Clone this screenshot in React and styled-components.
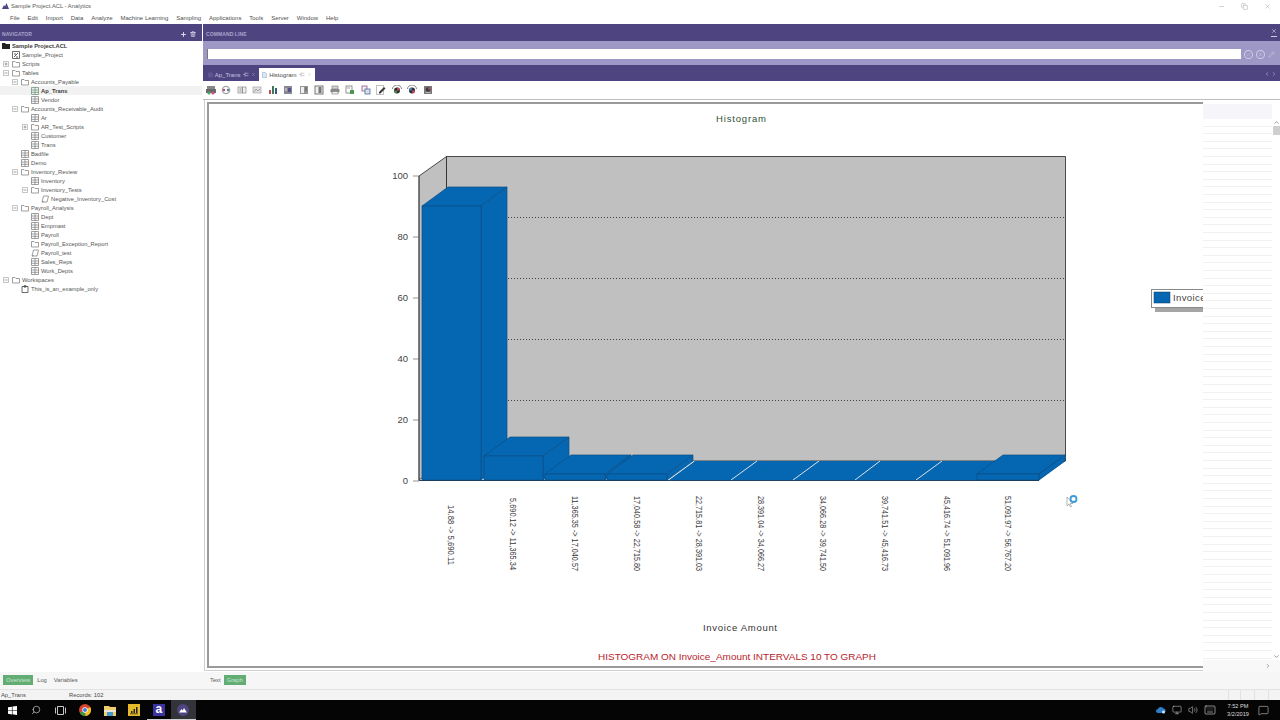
import React from "react";
import styled, { createGlobalStyle } from "styled-components";
import { Plus, Trash2, X, Minus, Copy, Search, Check, Pencil, ChevronLeft, ChevronRight, ChevronUp, ChevronDown, Volume2, Monitor, Keyboard, MessageSquare } from "lucide-react";

const Global = createGlobalStyle`
  html, body { margin: 0; padding: 0; background: #fff; }
  * { box-sizing: border-box; }
  #root { width: 1280px; height: 720px; overflow: hidden; }
`;

const Page = styled.div`
  width: 1280px; height: 720px; display: flex; flex-direction: column; overflow: hidden;
  font-family: "Liberation Sans", Arial, sans-serif; font-size: 5.8px; color: #555; background: #fff;
`;
const TitleBar = styled.div`
  height: 12px; display: flex; align-items: center; padding-left: 2px; gap: 2px; color: #5a5a5a; font-size: 5.8px;
`;
const WindowControls = styled.div`
  margin-left: auto; display: flex; align-items: center; color: #666; padding-right: 1.5px;
`;
const WindowButton = styled.span`
  width: 23px; display: flex; justify-content: center; align-items: center;
`;
const MenuBar = styled.div`
  height: 12px; display: flex; align-items: center; gap: 7.9px; padding-left: 10px; color: #505050; font-size: 6px;
`;
const Workspace = styled.div`
  height: 648px; display: flex;
`;
const Sidebar = styled.aside`
  width: 202px; flex: none; margin-right: 1px; display: flex; flex-direction: column;
`;
const PurpleHead = styled.div`
  height: 17px; flex: none; background: #4e4480; display: flex; align-items: center; padding: 3px ${p => p.$right}px 0 ${p => p.$left}px;
  color: #aaa5cc; font-size: 5px; font-weight: 700; letter-spacing: 0.1px;
`;
const HeadActions = styled.div`
  margin-left: auto; display: flex; align-items: center; gap: 3px; color: #e9e7f4;
`;
const CloseMark = styled.span`
  display: flex; padding-bottom: 2px; margin-top: -3px; border-bottom: 1px solid #cfcbe6; color: #e9e7f4;
`;
const Tree = styled.div`
  flex: 1; display: flex; flex-direction: column; color: #555;
`;
const TreeRow = styled.div`
  height: 9px; display: flex; align-items: center; padding-left: ${p => p.$off}px;
  background: ${p => (p.$selected ? "#f2f2f2" : "transparent")};
  font-weight: ${p => (p.$bold ? 700 : 400)}; color: ${p => (p.$bold ? "#3c3c3c" : "#565656")};
  white-space: nowrap;
`;
const ExpSlot = styled.span`
  width: 10px; flex: none; display: flex; align-items: center; padding-left: 1px;
`;
const IconSlot = styled.span`
  width: 10px; flex: none; display: flex; align-items: center;
`;
const Main = styled.main`
  flex: 1; min-width: 0; display: flex; flex-direction: column;
`;
const CommandRow = styled.div`
  height: 24px; flex: none; background: #9e98c6; display: flex; align-items: center; padding: 2px 4px 0 4px; gap: 2.5px;
`;
const CommandInput = styled.div`
  width: 1035px; height: 10px; background: #fff; border-left: 1px solid #777; margin-right: 1px;
`;
const RoundAction = styled.span`
  width: 9px; height: 9px; display: flex; align-items: center; justify-content: center; color: #d8d5ea;
  border-radius: 50%; border: ${p => (p.$plain ? "none" : "1px solid #d0cce4")};
`;
const TabsBar = styled.div`
  height: 16px; flex: none; background: #4e4480; display: flex; align-items: flex-end; padding-left: 5px;
`;
const Tab = styled.div`
  height: 13px; display: flex; align-items: center; gap: 2px; padding: 0 3px 0 ${p => (p.$active ? 3 : 0)}px;
  background: ${p => (p.$active ? "#fff" : "transparent")};
  color: ${p => (p.$active ? "#4a4a4a" : "#c9c5e2")}; font-size: 6px;
  width: ${p => (p.$active ? 56 : 51)}px;
`;
const TabTail = styled.span`
  margin-left: auto; display: flex; align-items: center; gap: 2.500px; color: ${p => (p.$active ? "#bbb" : "#b5b0d6")};
`;
const TabArrows = styled.div`
  margin: 0 3px 4px auto; display: flex; gap: 1px; color: #cfcce6;
`;
const Toolbar = styled.div`
  height: 19px; flex: none; border-bottom: 1px solid #bdbdbd; display: flex; align-items: center; gap: 5.5px; padding-left: 2.5px;
`;
const ToolSvg = styled.svg`
  flex: none; opacity: 0.88;
`;
const ChartRow = styled.div`
  flex: 1; min-height: 0; display: flex;
`;
const ChartWrap = styled.div`
  width: 999px; height: 571px; margin-left: 1px; flex: none; padding: 2px 0 0 2px;
  border-left: 1px solid #cfcfcf; border-bottom: 1px solid #cfcfcf;
`;
const ChartFrame = styled.div`
  width: 996px; height: 566px; overflow: hidden;
  box-shadow: inset 2px 2px 0 #9a9a9a, inset 0 -2px 0 #9a9a9a;
  svg { display: block; }
`;
const GhostPanel = styled.div`
  flex: 1; display: flex; flex-direction: column; padding-top: 4px;
`;
const GhostBand = styled.div`
  height: 15px; flex: none; background: #f5f5fa; margin-right: 8px;
`;
const GhostBody = styled.div`
  flex: 1; min-height: 0; display: flex;
`;
const GhostLines = styled.div`
  flex: 1;
  background: repeating-linear-gradient(to bottom, #fff 0, #fff 6.6px, #f1f1f1 6.6px, #f1f1f1 7.6px);
`;
const ScrollTrack = styled.div`
  width: 8px; flex: none; display: flex; flex-direction: column; align-items: center; color: #555;
`;
const ScrollThumb = styled.div`
  width: 7px; height: 9px; background: #cfcfcf;
`;
const ScrollGap = styled.div`
  flex: 1;
`;
const GhostFoot = styled.div`
  height: 12px; flex: none; background: #f8f8f8; display: flex; align-items: center; justify-content: flex-end; padding-right: 9px; color: #555;
`;
const BottomBar = styled.div`
  height: 17px; flex: none; background: #f6f6f6; display: flex; align-items: center; padding-bottom: 1px;
`;
const BottomLeft = styled.div`
  width: 207px; flex: none; display: flex; align-items: center; gap: 4px; padding-left: 3px;
`;
const BottomRight = styled.div`
  display: flex; align-items: center; gap: 3px; padding-left: 3px;
`;
const ViewTab = styled.span`
  height: 10px; display: flex; align-items: center; padding: 0 ${p => (p.$active ? 3 : 0)}px;
  background: ${p => (p.$active ? "#62ad74" : "transparent")}; color: ${p => (p.$active ? "#c8e6cf" : "#5a5a5a")};
  margin-right: ${p => p.$mr || 0}px;
`;
const StatusBar = styled.div`
  height: 11px; flex: none; background: #f3f3f3; border-top: 1px solid #e2e2e2; display: flex; align-items: center; padding-left: 1px; color: #4a4a4a;
`;
const StatusName = styled.span`
  width: 68px;
`;
const StatusCells = styled.div`
  margin-left: auto; display: flex; height: 100%;
`;
const StatusCell = styled.span`
  width: ${p => p.$w}px; border-left: 1px solid #e2e2e2;
`;
const Taskbar = styled.footer`
  height: 20px; flex: none; background: #050505; display: flex; align-items: center; color: #e4e4e4;
`;
const TaskItem = styled.span`
  width: ${p => p.$w || 24.5}px; height: 20px; flex: none; display: flex; align-items: center; justify-content: center;
  background: ${p => (p.$active ? "#33333a" : "transparent")};
  box-shadow: ${p => (p.$line ? "inset 0 -1px 0 #cfcfcf" : "none")};
`;
const Mirrored = styled.span`
  display: flex; transform: scaleX(-1);
`;
const AclGlyph = styled.span`
  width: 12px; height: 12px; background: #3b34a0; color: #fff; font-weight: 700; font-size: 12px; line-height: 11px; text-align: center; display: block;
`;
const Tray = styled.div`
  margin-left: auto; display: flex; align-items: center; gap: 5px; color: #ddd;
`;
const TrayIcon = styled.span`
  display: flex; margin-right: ${p => p.$mr || 0}px;
`;
const Clock = styled.div`
  width: 34px; margin-right: -2.5px; text-align: center; font-size: 5.6px; line-height: 8px; color: #ddd;
`;
const TrayTail = styled.span`
  width: 6.5px; flex: none;
`;

const TreeIcon = ({ kind, selected }) => {
  if (kind === "root")
    return <svg width="8" height="8" viewBox="0 0 8 8"><path d="M0 1h3l1 1h4v5H0z" fill="#222" /></svg>;
  if (kind === "folder")
    return <svg width="8" height="8" viewBox="0 0 8 8"><path d="M.5 1.5h2.5l1 1h3.500v4.500h-7z" fill="#fff" stroke="#777" strokeWidth=".7" /></svg>;
  if (kind === "table")
    return <svg width="8" height="8" viewBox="0 0 8 8"><path d="M.5.5h7v7h-7zM.5 3h7M.5 5.300h7M4 .5v7" fill={selected ? "#e7f3ea" : "#fff"} stroke={selected ? "#6a8a76" : "#777"} strokeWidth=".7" /></svg>;
  if (kind === "report")
    return <svg width="8" height="8" viewBox="0 0 8 8"><path d="M.5.5h7v7h-7z" fill="#fff" stroke="#444" strokeWidth=".8" /><path d="M2 6l4-4M2 3h2M4 6h2" stroke="#333" strokeWidth=".8" /></svg>;
  if (kind === "script")
    return <svg width="8" height="8" viewBox="0 0 8 8"><path d="M2.500 1h5l-1.500 6h-5zM1 7c1 0 1.500-.5 1.500-1" fill="#fff" stroke="#777" strokeWidth=".7" /></svg>;
  return <svg width="8" height="8" viewBox="0 0 8 8"><path d="M1 1.500h6v6H1zM3 .7h2v1.400H3z" fill="#fff" stroke="#444" strokeWidth=".8" /></svg>;
};

const Expander = ({ open }) => (
  <svg width="6" height="6" viewBox="0 0 6 6">
    <path d="M.5.5h5v5h-5z" fill="#fff" stroke="#aaa" strokeWidth=".7" />
    <path d={open ? "M1.500 3h3" : "M1.500 3h3M3 1.500v3"} stroke="#666" strokeWidth=".6" />
  </svg>
);

const PinMark = () => (
  <svg width="6" height="5" viewBox="0 0 6 5"><path d="M0 2.500h2M2 .5v4M2 1.300h3.500M2 3.700h3.500" fill="none" stroke="currentColor" strokeWidth=".7" /></svg>
);

const OFF = [2, 2, 11, 21, 31];
const rows = [
  { t: "Sample Project.ACL", l: 0, i: "root", b: true },
  { t: "Sample_Project", l: 1, i: "report" },
  { t: "Scripts", l: 1, i: "folder", e: "plus" },
  { t: "Tables", l: 1, i: "folder", e: "minus" },
  { t: "Accounts_Payable", l: 2, i: "folder", e: "minus" },
  { t: "Ap_Trans", l: 3, i: "table", b: true, s: true },
  { t: "Vendor", l: 3, i: "table" },
  { t: "Accounts_Receivable_Audit", l: 2, i: "folder", e: "minus" },
  { t: "Ar", l: 3, i: "table" },
  { t: "AR_Test_Scripts", l: 3, i: "folder", e: "plus" },
  { t: "Customer", l: 3, i: "table" },
  { t: "Trans", l: 3, i: "table" },
  { t: "Badfile", l: 2, i: "table" },
  { t: "Demo", l: 2, i: "table" },
  { t: "Inventory_Review", l: 2, i: "folder", e: "minus" },
  { t: "Inventory", l: 3, i: "table" },
  { t: "Inventory_Tests", l: 3, i: "folder", e: "minus" },
  { t: "Negative_Inventory_Cost", l: 4, i: "script" },
  { t: "Payroll_Analysis", l: 2, i: "folder", e: "minus" },
  { t: "Dept", l: 3, i: "table" },
  { t: "Empmast", l: 3, i: "table" },
  { t: "Payroll", l: 3, i: "table" },
  { t: "Payroll_Exception_Report", l: 3, i: "folder" },
  { t: "Payroll_test", l: 3, i: "script" },
  { t: "Sales_Reps", l: 3, i: "table" },
  { t: "Work_Depts", l: 3, i: "table" },
  { t: "Workspaces", l: 1, i: "folder", e: "minus" },
  { t: "This_is_an_example_only", l: 2, i: "clip" },
];

const menus = ["File", "Edit", "Import", "Data", "Analyze", "Machine Learning", "Sampling", "Applications", "Tools", "Server", "Window", "Help"];

const Ico = ({ children }) => <ToolSvg width="10" height="10" viewBox="0 0 10 10">{children}</ToolSvg>;
const toolIcons = [
  <Ico key="0"><rect x="1" y="1" width="8" height="4" fill="#777" /><rect x="0" y="4" width="10" height="4" fill="#555" /><circle cx="3" cy="8" r="1.600" fill="#3a9a4a" /><circle cx="7" cy="8" r="1.600" fill="#c23a7a" /></Ico>,
  <Ico key="1"><circle cx="5" cy="5" r="3.600" fill="none" stroke="#999" strokeWidth="1.400" /><circle cx="3" cy="5" r="1.200" fill="#b03060" /><circle cx="7" cy="5" r="1.200" fill="#38707a" /></Ico>,
  <Ico key="2"><rect x="1" y="2" width="8" height="6" fill="#eee" stroke="#777" strokeWidth=".7" /><path d="M2.500 4h2M2.500 6h2M5.500 2v6" stroke="#555" strokeWidth=".7" /></Ico>,
  <Ico key="3"><rect x="1" y="2" width="8" height="6" fill="#ddd" stroke="#999" strokeWidth=".7" /><path d="M2 7l2-3 2 2 2-2" fill="none" stroke="#778" strokeWidth=".7" /></Ico>,
  <Ico key="4"><rect x="1" y="5" width="2" height="4" fill="#b8332e" /><rect x="4" y="1" width="2" height="8" fill="#1e6a3a" /><rect x="7" y="3" width="2" height="6" fill="#26416e" /></Ico>,
  <Ico key="5"><rect x="1" y="1" width="8" height="8" fill="#778" /><rect x="5" y="3" width="3" height="4" fill="#3d3a80" /><rect x="2" y="3" width="2" height="3" fill="#b8a8a8" /></Ico>,
  <Ico key="6"><rect x="1" y="1" width="8" height="8" fill="#888" /><rect x="2" y="2" width="3" height="6" fill="#eee" /><path d="M6 3h2M6 5h2" stroke="#333" strokeWidth=".8" /></Ico>,
  <Ico key="7"><rect x="1" y="1" width="8" height="8" fill="#eee" stroke="#666" /><rect x="4.500" y="2" width="3" height="6" fill="#666" /></Ico>,
  <Ico key="8"><rect x="2" y="1" width="6" height="3" fill="#ccc" stroke="#666" strokeWidth=".6" /><rect x="0.5" y="4" width="9" height="3.500" rx=".8" fill="#777" /><rect x="2" y="6.500" width="6" height="2.500" fill="#eee" stroke="#666" strokeWidth=".6" /></Ico>,
  <Ico key="9"><rect x="1" y="1" width="6" height="7" fill="#fff" stroke="#666" strokeWidth=".8" /><rect x="5" y="5" width="4" height="4" fill="#2f8a3a" /><path d="M2 3h3" stroke="#666" strokeWidth=".7" /></Ico>,
  <Ico key="10"><rect x="1" y="1" width="5" height="5" fill="#eee" stroke="#8a3a7a" strokeWidth=".8" /><rect x="4" y="4" width="5" height="5" fill="#d8d8e8" stroke="#3a5a8a" strokeWidth=".8" /></Ico>,
  <Ico key="11"><path d="M.5.5h7v9h-7z" fill="none" stroke="#333" strokeWidth=".7" strokeDasharray="1 1" /><path d="M3 7l5-5 1.500 1.500-5 5H3z" fill="#222" /></Ico>,
  <Ico key="12"><path d="M.5 4a4.500 4 0 0 1 9 0" fill="none" stroke="#555" strokeWidth=".8" /><circle cx="5" cy="5.500" r="3" fill="#111" /><path d="M5 5.500V2.500a3 3 0 0 1 3 3z" fill="#b5304a" /><path d="M5 5.500H2a3 3 0 0 0 3 3z" fill="#2c7a3c" /></Ico>,
  <Ico key="13"><path d="M.5 4a4.500 4 0 0 1 9 0" fill="none" stroke="#555" strokeWidth=".8" /><circle cx="5" cy="5.500" r="3" fill="#111" /><path d="M5 5.500V2.500a3 3 0 0 0-3 3z" fill="#3a6ab0" /><path d="M5 5.500h3a3 3 0 0 1-3 3z" fill="#b5304a" /></Ico>,
  <Ico key="14"><rect x="1" y="1" width="8" height="8" fill="#666" /><circle cx="5" cy="4.500" r="2.200" fill="#222" /><path d="M5 4.500V2.300a2.200 2.200 0 0 1 2.200 2.200z" fill="#b5304a" /><rect x="2.500" y="7" width="5" height="1" fill="#aaa" /></Ico>,
];

const xLabels = [
  ["14.88 -> 5,690.11", 450.5, 505, 60],
  ["5,690.12 -> 11,365.34", 512.5, 498, 72],
  ["11,365.35 -> 17,040.57", 574.5, 496, 75],
  ["17,040.58 -> 22,715.80", 636.5, 496, 75],
  ["22,715.81 -> 28,391.03", 698.5, 496, 75],
  ["28,391.04 -> 34,066.27", 760.5, 496, 75],
  ["34,066.28 -> 39,741.50", 822.5, 496, 75],
  ["39,741.51 -> 45,416.73", 884.5, 496, 75],
  ["45,416.74 -> 51,091.96", 946.5, 496, 75],
  ["51,091.97 -> 56,767.20", 1007.5, 496, 75],
];
const BLUE = "#0567b2";
const EDGE = "#0d4d85";

const bars = [
  [422, 481, 206],
  [484, 543, 456],
  [545, 605, 474],
  [607, 667, 474],
  [977, 1039, 474],
];

const Chart = () => (
  <svg width="996" height="565" viewBox="207 102 996 565" fontFamily="'Liberation Sans', Arial, sans-serif">
    <text x="741" y="122" fontSize="9.500" textAnchor="middle" fill="#2f4f3a" textLength="50">Histogram</text>

    <polygon points="446.500,156.500 1065.500,156.500 1065.500,461 446.500,461" fill="#c0c0c0" stroke="#222" strokeWidth=".8" />
    <polygon points="419,176 446.500,156.500 446.500,461 419,480" fill="#c0c0c0" stroke="#222" strokeWidth=".8" />
    {[217.5, 278.5, 339.5, 400.5].map(y => (
      <line key={y} x1="508" x2="1065" y1={y} y2={y} stroke="#222" strokeWidth=".8" strokeDasharray="1 2" />
    ))}

    {[[100, 176], [80, 237], [60, 298], [40, 359], [20, 420], [0, 481]].map(([v, y]) => (
      <g key={v}>
        <text x="408" y={y + 2.5} fontSize="9.500" textAnchor="end" fill="#444">{v}</text>
        <line x1="413" x2="419" y1={y} y2={y} stroke="#666" strokeWidth=".7" />
      </g>
    ))}

    <polygon points="669,480 695,461 1065,461 1039,480" fill={BLUE} />
    {[[668, 694], [731, 757], [793, 819], [855, 880], [916, 942]].map(([a, b]) => (
      <line key={a} x1={a} y1="480" x2={b} y2="461" stroke="#d6e2ee" strokeWidth="1" />
    ))}

    {bars.map(([x0, x1, y]) => (
      <g key={x0} stroke={EDGE} strokeWidth=".7">
        <polygon points={`${x0},${y} ${x0 + 26},${y - 19} ${x1 + 26},${y - 19} ${x1},${y}`} fill={BLUE} />
        <polygon points={`${x1},${y} ${x1 + 26},${y - 19} ${x1 + 26},461 ${x1},480`} fill={BLUE} />
        <rect x={x0} y={y} width={x1 - x0} height={480 - y} fill={BLUE} />
      </g>
    ))}
    <line x1="419" x2="1039" y1="480.500" y2="480.500" stroke="#0a2f52" strokeWidth=".9" />
    <line x1="419" x2="419" y1="176" y2="481" stroke="#555" strokeWidth="1" />

    {xLabels.map(([t, x, y, len]) => (
      <text key={t} transform={`translate(${x - 3},${y}) rotate(90)`} fontSize="8.600" fill="#3a3a3a" textLength={len} lengthAdjust="spacingAndGlyphs">{t}</text>
    ))}

    <text x="740" y="631" fontSize="9.500" textAnchor="middle" fill="#333" textLength="74">Invoice Amount</text>
    <text x="598" y="659.500" fontSize="9" fill="#b8232b" textLength="278" lengthAdjust="spacingAndGlyphs">HISTOGRAM ON Invoice_Amount INTERVALS 10 TO GRAPH</text>

    <rect x="1155" y="293" width="60" height="19" fill="#a5a5a5" />
    <rect x="1151.500" y="289.500" width="70" height="18" fill="#fff" stroke="#888" strokeWidth="1" />
    <rect x="1154" y="292" width="16" height="11" fill={BLUE} stroke="#0a3a66" strokeWidth=".5" />
    <text x="1173" y="300.500" fontSize="9.500" letterSpacing=".4" fill="#444">Invoice Amount</text>

    <path d="M1067 497v9l2-2 1.500 3 1-.5-1.500-3h3z" fill="#fff" stroke="#888" strokeWidth=".6" />
    <circle cx="1073.500" cy="499" r="3" fill="none" stroke="#3d9ad8" strokeWidth="1.800" />
  </svg>
);

const WinLogo = () => (
  <svg width="9" height="9" viewBox="0 0 11 11"><path d="M0 1.500l4.800-.7v4.400H0zM5.500.7L11 0v5.200H5.500zM0 5.900h4.800v4.400L0 9.600zM5.500 5.900H11V11l-5.500-.8z" fill="#fff" /></svg>
);
const TaskViewGlyph = () => (
  <svg width="11" height="9" viewBox="0 0 11 9"><path d="M2.500.5h6v8h-6zM.5 1.500v6M10.500 1.500v6" fill="none" stroke="#ddd" strokeWidth=".9" /></svg>
);
const ChromeLogo = () => (
  <svg width="12" height="12" viewBox="0 0 12 12"><circle cx="6" cy="6" r="6" fill="#d8432f" /><path d="M6 6L.8 9a6 6 0 0 0 5.700 3z" fill="#2f9e44" /><path d="M6 6l5.200-3A6 6 0 0 1 6.500 12z" fill="#f3c11b" /><circle cx="6" cy="6" r="2.700" fill="#fff" /><circle cx="6" cy="6" r="2" fill="#3b7de0" /></svg>
);
const ExplorerLogo = () => (
  <svg width="12" height="11" viewBox="0 0 12 11"><path d="M0 1h5l1 1h6v9H0z" fill="#f0cf6a" /><rect x="0" y="5" width="12" height="2" fill="#e8e8d8" /><rect x="3" y="7" width="6" height="4" fill="#3f9bd0" /></svg>
);
const PowerLogo = () => (
  <svg width="12" height="12" viewBox="0 0 12 12"><rect width="12" height="12" fill="#e4b92a" /><path d="M3 9V7h1.500v2zM5.500 9V5H7v4zM8 9V3h1.500v6z" fill="#222" /><path d="M2 9.800h8" stroke="#222" strokeWidth=".7" /></svg>
);
const AnalyticsLogo = ({ size = 12 }) => (
  <svg width={size} height={size} viewBox="0 0 12 12"><circle cx="6" cy="6" r="6" fill="#4e4480" /><path d="M2 8.500l2.500-3.500 1.200 1.500L7 4l3 4.500z" fill="#fff" /></svg>
);
const TinyMountain = () => (
  <svg width="7" height="6" viewBox="0 0 7 6"><path d="M0 6l2-4 1 1.500L4.500 0 7 6z" fill="#4e4480" /></svg>
);
const CloudIcon = () => (
  <svg width="10" height="8" viewBox="0 0 10 8"><path d="M2 7a2 2 0 0 1 0-4 3 3 0 0 1 5.500-.5A2.300 2.300 0 0 1 8 7z" fill="#2f7fc8" /><circle cx="7.500" cy="6" r="1.500" fill="#cfe2f5" /></svg>
);

export default function App() {
  return (
    <Page>
      <Global />
      <TitleBar>
        <TinyMountain />
        <span>Sample Project.ACL - Analytics</span>
        <WindowControls>
          <WindowButton><Minus size={7} strokeWidth={1} /></WindowButton>
          <WindowButton><Copy size={7} strokeWidth={1} /></WindowButton>
          <WindowButton><X size={7} strokeWidth={1} /></WindowButton>
        </WindowControls>
      </TitleBar>
      <MenuBar>{menus.map(m => <span key={m}>{m}</span>)}</MenuBar>
      <Workspace>
        <Sidebar>
          <PurpleHead $left={2} $right={6}>
            NAVIGATOR
            <HeadActions>
              <Plus size={7} strokeWidth={3} />
              <Trash2 size={6} strokeWidth={2.5} />
            </HeadActions>
          </PurpleHead>
          <Tree>
            {rows.map(r => (
              <TreeRow key={r.t} $off={OFF[r.l]} $bold={r.b} $selected={r.s}>
                {r.l > 0 && <ExpSlot>{r.e && <Expander open={r.e === "minus"} />}</ExpSlot>}
                <IconSlot><TreeIcon kind={r.i} selected={r.s} /></IconSlot>
                <span>{r.t}</span>
              </TreeRow>
            ))}
          </Tree>
        </Sidebar>
        <Main>
          <PurpleHead $left={3} $right={3}>
            COMMAND LINE
            <HeadActions><CloseMark><X size={6} strokeWidth={2} /></CloseMark></HeadActions>
          </PurpleHead>
          <CommandRow>
            <CommandInput />
            <RoundAction><Check size={5} strokeWidth={2} /></RoundAction>
            <RoundAction><X size={5} strokeWidth={2} /></RoundAction>
            <RoundAction $plain><Pencil size={7} strokeWidth={1.5} /></RoundAction>
          </CommandRow>
          <TabsBar>
            <Tab>
              <svg width="8" height="8" viewBox="0 0 8 8"><path d="M.5.500h7v7h-7zM.5 3h7M.5 5.300h7M4 .500v7" fill="none" stroke="#7a74a8" strokeWidth=".7" /></svg>
              <span>Ap_Trans</span>
              <TabTail><PinMark /><X size={5} strokeWidth={1.5} /></TabTail>
            </Tab>
            <Tab $active>
              <svg width="7" height="8" viewBox="0 0 7 8"><path d="M.5.500h4l2 2v5h-6z" fill="#dbe7f5" stroke="#7f9fc4" strokeWidth=".7" /></svg>
              <span>Histogram</span>
              <TabTail $active><PinMark /><X size={5} strokeWidth={1.5} /></TabTail>
            </Tab>
            <TabArrows><ChevronLeft size={6} strokeWidth={2} /><ChevronRight size={6} strokeWidth={2} /></TabArrows>
          </TabsBar>
          <Toolbar>{toolIcons}</Toolbar>
          <ChartRow>
            <ChartWrap>
              <ChartFrame><Chart /></ChartFrame>
            </ChartWrap>
            <GhostPanel>
              <GhostBand />
              <GhostBody>
                <GhostLines />
                <ScrollTrack>
                  <ChevronUp size={7} strokeWidth={2} />
                  <ScrollThumb />
                  <ScrollGap />
                  <ChevronDown size={7} strokeWidth={2} />
                </ScrollTrack>
              </GhostBody>
              <GhostFoot><ChevronRight size={6} strokeWidth={2} /></GhostFoot>
            </GhostPanel>
          </ChartRow>
        </Main>
      </Workspace>
      <BottomBar>
        <BottomLeft>
          <ViewTab $active>Overview</ViewTab>
          <ViewTab $mr={3}>Log</ViewTab>
          <ViewTab>Variables</ViewTab>
        </BottomLeft>
        <BottomRight>
          <ViewTab>Text</ViewTab>
          <ViewTab $active>Graph</ViewTab>
        </BottomRight>
      </BottomBar>
      <StatusBar>
        <StatusName>Ap_Trans</StatusName>
        <span>Records: 102</span>
        <StatusCells>
          <StatusCell $w={12} />
          <StatusCell $w={14} />
          <StatusCell $w={14} />
          <StatusCell $w={12} />
        </StatusCells>
      </StatusBar>
      <Taskbar>
        <TaskItem $w={24}><WinLogo /></TaskItem>
        <TaskItem><Mirrored><Search size={10} strokeWidth={1.5} /></Mirrored></TaskItem>
        <TaskItem><TaskViewGlyph /></TaskItem>
        <TaskItem><ChromeLogo /></TaskItem>
        <TaskItem><ExplorerLogo /></TaskItem>
        <TaskItem><PowerLogo /></TaskItem>
        <TaskItem $line><AclGlyph>a</AclGlyph></TaskItem>
        <TaskItem $active $line><AnalyticsLogo /></TaskItem>
        <Tray>
          <TrayIcon $mr={1}><CloudIcon /></TrayIcon>
          <TrayIcon $mr={1}><Monitor size={10} strokeWidth={1.2} /></TrayIcon>
          <TrayIcon $mr={1}><Volume2 size={10} strokeWidth={1.2} /></TrayIcon>
          <TrayIcon><Keyboard size={12} strokeWidth={1.2} /></TrayIcon>
          <Clock>7:52 PM<br />3/2/2019</Clock>
          <TrayIcon><MessageSquare size={11} strokeWidth={1.2} /></TrayIcon>
          <TrayTail />
        </Tray>
      </Taskbar>
    </Page>
  );
}
